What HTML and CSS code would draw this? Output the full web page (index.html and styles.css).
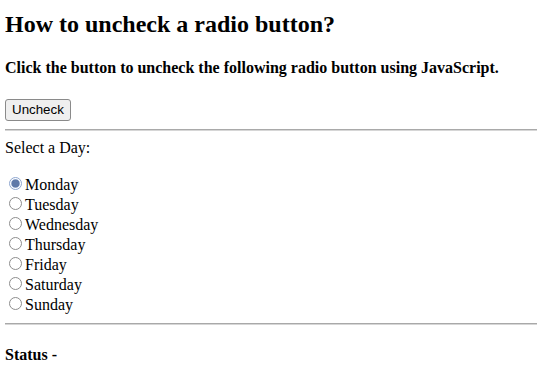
FILE: index.html
```html
<!DOCTYPE html>
<html lang="en">
<head>
  <meta charset="UTF-8">
  <title>Uncheck a radio button</title>
  <link rel="stylesheet" href="styles.css">
</head>
<body>
  <h2>How to uncheck a radio button?</h2>
  <h4>Click the button to uncheck the following radio button using JavaScript.</h4>
  <div class="actions">
    <button id="uncheck-btn" class="btn">Uncheck</button>
  </div>
  <hr>
  <div class="prompt">Select a Day:</div>
  <div class="days">
    <input type="radio" name="day" id="monday" class="radio" checked><label for="monday">Monday</label><br>
    <input type="radio" name="day" id="tuesday" class="radio"><label for="tuesday">Tuesday</label><br>
    <input type="radio" name="day" id="wednesday" class="radio"><label for="wednesday">Wednesday</label><br>
    <input type="radio" name="day" id="thursday" class="radio"><label for="thursday">Thursday</label><br>
    <input type="radio" name="day" id="friday" class="radio"><label for="friday">Friday</label><br>
    <input type="radio" name="day" id="saturday" class="radio"><label for="saturday">Saturday</label><br>
    <input type="radio" name="day" id="sunday" class="radio"><label for="sunday">Sunday</label>
  </div>
  <hr>
  <h4>Status - <span id="status"></span></h4>

  <script>
    document.getElementById('uncheck-btn').addEventListener('click', () => {
      document.querySelectorAll('input[name="day"]').forEach(r => { r.checked = false; });
      document.getElementById('status').textContent = 'All radio buttons unchecked';
    });
  </script>
</body>
</html>
```

FILE: styles.css
```css
body {
  font-family: 'Liberation Serif', 'Times New Roman', serif;
  font-size: 16px;
  margin: 0 0 8px 5px;
  color: #000;
}

h2 {
  font-size: 24px;
  margin: 11px 0 19.92px;
}

h4 {
  font-size: 16px;
  margin: 21.28px 0;
}

.actions {
  display: flex;
}

.btn {
  font-family: 'Liberation Sans', Arial, sans-serif;
  font-size: 13.33px;
  height: 22px;
  padding: 1px 6px;
  border: 1px solid #8a8a8a;
  border-radius: 3px;
  background-color: #efefef;
  color: #000;
}

hr {
  margin: 8px 0;
  border: 0;
  border-top: 1px solid #a9a9a9;
  border-bottom: 1px solid #d6d6d6;
}

.prompt {
  margin-bottom: 18.4px;
}

.days {
  line-height: 20px;
}

.radio {
  appearance: none;
  width: 13px;
  height: 13px;
  margin: 0 3px 0 4px;
  border: 1px solid #8d8d8d;
  border-radius: 50%;
  background: #fff;
  vertical-align: baseline;
}

.radio:checked {
  border-color: #8ea6cf;
  background: radial-gradient(circle, #5f79a8 0, #5f79a8 3.6px, #c9d5ea 4.4px, #fff 5px);
}
```
